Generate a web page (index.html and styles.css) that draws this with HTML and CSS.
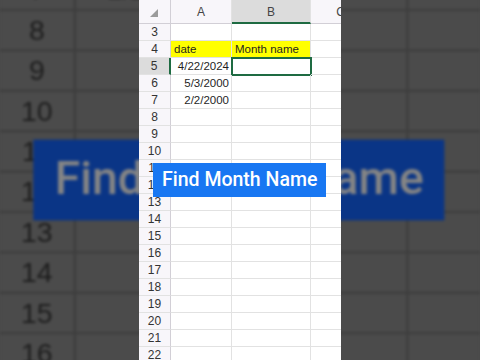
FILE: index.html
```html
<!DOCTYPE html>
<html lang="en">
<head>
    <meta charset="UTF-8">
    <meta name="viewport" content="width=device-width, initial-scale=1.0">
    <title>Find Month Name</title>
    <link rel="stylesheet" href="styles.css">
</head>
<body>
    <div class="backdrop" id="backdrop" aria-hidden="true"></div>

    <div class="strip" id="strip">
        <div class="sheet" id="sheet">
            <div class="cell corner"><span class="select-all"></span></div>
            <div class="cell col-head">A</div>
            <div class="cell col-head selected">B</div>
            <div class="cell col-head">C</div>
            <!-- rows are rendered below -->
        </div>
        <div class="banner">Find Month Name</div>
    </div>

    <script>
        // cell values by row number
        const rows = {
            4: [{ text: 'date', cls: 'yellow' }, { text: 'Month name', cls: 'yellow' }],
            5: [{ text: '4/22/2024', cls: 'num' }, { text: '', cls: 'active' }],
            6: [{ text: '5/3/2000', cls: 'num' }],
            7: [{ text: '2/2/2000', cls: 'num' }]
        };

        const sheet = document.getElementById('sheet');
        let html = '';
        for (let r = 3; r <= 22; r++) {
            const cells = rows[r] || [];
            html += `<div class="cell row-head${r === 5 ? ' selected' : ''}">${r}</div>`;
            for (let c = 0; c < 3; c++) {
                const cell = cells[c] || { text: '', cls: '' };
                html += `<div class="cell ${cell.cls}">${cell.text}</div>`;
            }
        }
        sheet.insertAdjacentHTML('beforeend', html);

        // blurred, zoomed copy behind the strip
        const copy = document.getElementById('strip').cloneNode(true);
        copy.removeAttribute('id');
        copy.classList.add('zoomed');
        document.getElementById('backdrop').appendChild(copy);
    </script>
</body>
</html>
```

FILE: styles.css
```css
* {
    margin: 0;
    padding: 0;
    box-sizing: border-box;
}

body {
    width: 480px;
    height: 360px;
    overflow: hidden;
    position: relative;
    display: flex;
    justify-content: center;
    background: #4b4b4b;
    font-family: 'Liberation Sans', Arial, sans-serif;
}

.backdrop {
    position: absolute;
    inset: 0;
    display: flex;
    justify-content: center;
}

.strip {
    position: relative;
    width: 202px;
    height: 360px;
    overflow: hidden;
    background: white;
}

.sheet {
    display: grid;
    grid-template-columns: 32px 61px 79px 60px;
    grid-template-rows: 24px;
    grid-auto-rows: 17px;
}

.cell {
    border-right: 1px solid #e2e2e2;
    border-bottom: 1px solid #e2e2e2;
    font-size: 11.5px;
    line-height: 16px;
    padding: 0 3px;
    color: #1f1f1f;
    white-space: nowrap;
    overflow: hidden;
}

.corner {
    display: flex;
    align-items: flex-end;
    padding: 0 0 6px 11px;
    background: #f8f6fa;
    border-right: 1px solid #d2cfd6;
    border-bottom: 1px solid #d2cfd6;
}

.select-all {
    width: 0;
    height: 0;
    border-left: 8px solid transparent;
    border-bottom: 8px solid #9b9b9b;
}

.col-head {
    background: #f8f6fa;
    border-bottom: 1px solid #d2cfd6;
    text-align: center;
    line-height: 25px;
    font-size: 12px;
    color: #444;
}

.col-head.selected {
    background: #dcdcdc;
    border-bottom: 2px solid #1e6b42;
}

.row-head {
    background: #f8f6fa;
    border-right: 1px solid #d2cfd6;
    text-align: center;
    font-size: 12px;
    color: #333;
    padding: 0;
}

.row-head.selected {
    background: #dcdcdc;
    border-right: 2px solid #1e6b42;
}

.yellow {
    background: #ffff00;
}

.num {
    text-align: right;
    padding-right: 2px;
}

.active {
    outline: 2px solid #1e6b42;
    outline-offset: -1px;
}

.banner {
    position: absolute;
    left: 14px;
    top: 163px;
    height: 34px;
    padding: 0 9px;
    background: #1877f2;
    color: white;
    font-family: Roboto, 'Liberation Sans', sans-serif;
    font-weight: 500;
    font-size: 19.5px;
    line-height: 34px;
    white-space: nowrap;
}

/* zoomed, dimmed copy */
.strip.zoomed {
    background: #4b4b4b;
    transform: scale(2.376);
    transform-origin: 101px 180px;
    filter: blur(0.6px);
}

.strip.zoomed .cell {
    background: #4b4b4b;
    border-color: #3d3d3d;
    color: #1c1c1c;
}

.strip.zoomed .banner {
    background: #0a3586;
    color: #858585;
}
```
